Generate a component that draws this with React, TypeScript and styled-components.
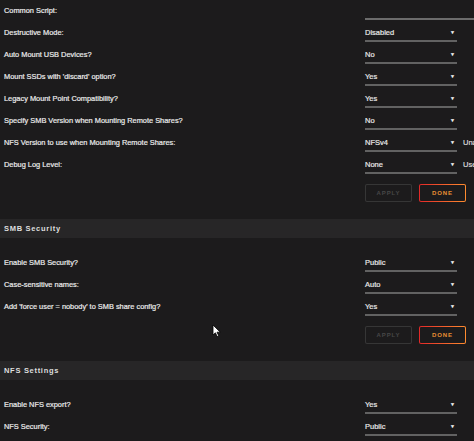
import styled, { createGlobalStyle } from "styled-components";

const GlobalStyle = createGlobalStyle`
    html, body {
        margin: 0;
        padding: 0;
        background: #1c1b1c;
        overflow: hidden;
    }
    body {
        font-family: "Liberation Sans", Arial, sans-serif;
    }
`;

const Page = styled.div`
    position: relative;
    width: 474px;
    height: 441px;
    overflow: hidden;
    background: #1c1b1c;
    color: #e4e4e4;
`;

const Content = styled.div`
    margin-top: -1px;
    display: flex;
    flex-direction: column;
`;

const Section = styled.section`
    display: flex;
    flex-direction: column;
`;

const SectionHeader = styled.div`
    height: 19px;
    display: flex;
    align-items: center;
    padding-left: 4px;
    background: #272627;
    font-size: 7.5px;
    font-weight: 700;
    letter-spacing: 0.7px;
    color: #dedede;
    margin-top: 17px;
    margin-bottom: 13px;
`;

const Row = styled.div`
    display: grid;
    grid-template-columns: 365px 92px 1fr;
    height: 22px;
    align-items: center;
`;

const Label = styled.div`
    padding-left: 4px;
    font-size: 7.4px;
    color: #ececec;
    -webkit-text-stroke: 0.2px #ececec;
    white-space: nowrap;
`;

const Select = styled.div<{ $wide?: boolean }>`
    box-sizing: border-box;
    height: 20px;
    padding-top: 2px;
    display: flex;
    align-items: center;
    justify-content: space-between;
    border-bottom: 2px solid ${(p) => (p.$wide ? "#6c6c6c" : "#626262")};
    font-size: 7.5px;
    color: #e8e8e8;
    -webkit-text-stroke: 0.2px #e8e8e8;
    width: ${(p) => (p.$wide ? "120px" : "92px")};
`;

const Arrow = styled.span`
    font-size: 5px;
    color: #f4f4f4;
    padding-right: 2px;
`;

const SideNote = styled.div`
    padding-left: 6px;
    font-size: 7.5px;
    color: #dcdcdc;
    -webkit-text-stroke: 0.2px #dcdcdc;
    white-space: nowrap;
`;

const ButtonRow = styled.div`
    display: flex;
    gap: 7px;
    padding-left: 365px;
    margin-top: 9px;
`;

const Button = styled.div<{ $primary?: boolean }>`
    box-sizing: border-box;
    width: 47px;
    height: 18px;
    display: flex;
    align-items: center;
    justify-content: center;
    font-size: 6px;
    font-weight: 700;
    letter-spacing: 0.9px;
    border-radius: 2px;
    color: ${(p) => (p.$primary ? "#e98f33" : "#474747")};
    border: 1.5px solid transparent;
    background: ${(p) =>
        p.$primary
            ? "linear-gradient(#1c1b1c, #1c1b1c) padding-box, linear-gradient(90deg, #e22828, #ff8c2f) border-box"
            : "linear-gradient(#1c1b1c, #1c1b1c) padding-box, linear-gradient(#363636, #363636) border-box"};
`;

const Cursor = styled.svg`
    position: absolute;
    left: 212px;
    top: 324px;
`;

type Setting = { label: string; value?: string; note?: string; text?: boolean };

const general: Setting[] = [
    { label: "Common Script:", text: true },
    { label: "Destructive Mode:", value: "Disabled" },
    { label: "Auto Mount USB Devices?", value: "No" },
    { label: "Mount SSDs with 'discard' option?", value: "Yes" },
    { label: "Legacy Mount Point Compatibility?", value: "Yes" },
    { label: "Specify SMB Version when Mounting Remote Shares?", value: "No" },
    { label: "NFS Version to use when Mounting Remote Shares:", value: "NFSv4", note: "Unassigned" },
    { label: "Debug Log Level:", value: "None", note: "Use" },
];

const smb: Setting[] = [
    { label: "Enable SMB Security?", value: "Public" },
    { label: "Case-sensitive names:", value: "Auto" },
    { label: "Add 'force user = nobody' to SMB share config?", value: "Yes" },
];

const nfs: Setting[] = [
    { label: "Enable NFS export?", value: "Yes" },
    { label: "NFS Security:", value: "Public" },
];

function SettingRow({ setting }: { setting: Setting }) {
    return (
        <Row>
            <Label>{setting.label}</Label>
            {setting.text ? (
                <Select $wide />
            ) : (
                <Select>
                    <span>{setting.value}</span>
                    <Arrow>▼</Arrow>
                </Select>
            )}
            {setting.note && <SideNote>{setting.note}</SideNote>}
        </Row>
    );
}

function Buttons() {
    return (
        <ButtonRow>
            <Button>APPLY</Button>
            <Button $primary>DONE</Button>
        </ButtonRow>
    );
}

function App() {
    return (
        <Page>
            <GlobalStyle />
            <Content>
                <Section>
                    {general.map((s) => (
                        <SettingRow key={s.label} setting={s} />
                    ))}
                    <Buttons />
                </Section>
                <Section>
                    <SectionHeader>SMB Security</SectionHeader>
                    {smb.map((s) => (
                        <SettingRow key={s.label} setting={s} />
                    ))}
                    <Buttons />
                </Section>
                <Section>
                    <SectionHeader>NFS Settings</SectionHeader>
                    {nfs.map((s) => (
                        <SettingRow key={s.label} setting={s} />
                    ))}
                </Section>
            </Content>
            <Cursor width="10" height="14" viewBox="0 0 10 14">
                <path
                    d="M1 1 L1 11 L3.4 8.8 L5.2 12.6 L6.8 11.9 L5 8.2 L8.3 8.2 Z"
                    fill="#fff"
                    stroke="#000"
                    strokeWidth="0.8"
                    strokeLinejoin="round"
                />
            </Cursor>
        </Page>
    );
}

export default App;
